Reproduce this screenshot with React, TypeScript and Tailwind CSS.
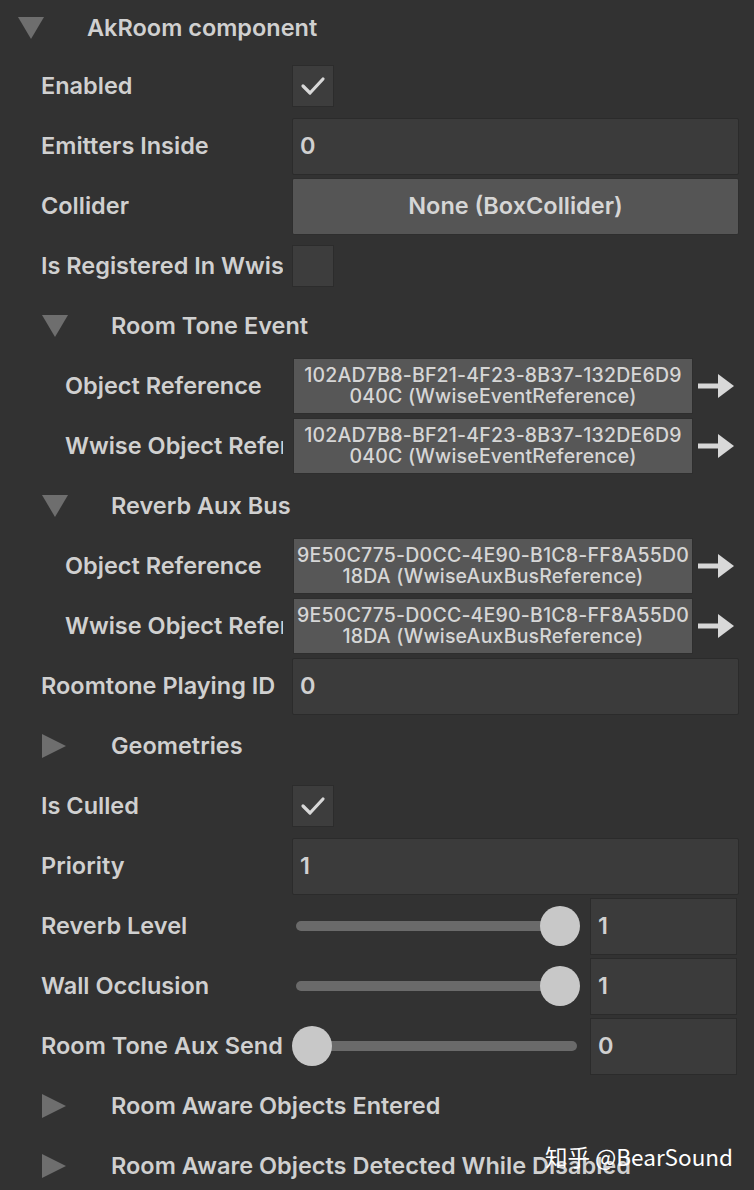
import React from "react";

const font = { fontFamily: "Inter, 'Noto Sans', sans-serif" };

function TriDown({ sub }: { sub?: boolean }) {
  return (
    <svg width="26" height="24" viewBox="0 0 26 24" className={sub ? "ml-[42px]" : "ml-[18px]"}>
      <polygon points="0,1 26,1 13,23" fill="#6e6e6e" />
    </svg>
  );
}

function TriRight() {
  return (
    <svg width="24" height="24" viewBox="0 0 24 24" className="ml-[42px]">
      <polygon points="0,0 24,12 0,24" fill="#6e6e6e" />
    </svg>
  );
}

function Label({ text, sub }: { text: string; sub?: boolean }) {
  return (
    <div
      className={`${sub ? "pl-[65px]" : "pl-[41px]"} w-[283px] shrink-0 overflow-hidden whitespace-nowrap text-[23.5px] text-[#d0d0d0] font-semibold`}
    >
      {text}
    </div>
  );
}

function Row({ children }: { children: React.ReactNode }) {
  return <div className="flex items-center h-[60px]">{children}</div>;
}

function Check({ checked }: { checked?: boolean }) {
  return (
    <div className="ml-[9px] w-[42px] h-[42px] bg-[#3d3d3d] border border-[#2c2c2c] flex items-center justify-center">
      {checked && (
        <svg width="26" height="22" viewBox="0 0 26 22">
          <polyline points="3,11 10,18 23,4" fill="none" stroke="#d8d8d8" strokeWidth="3.2" strokeLinecap="round" strokeLinejoin="round" />
        </svg>
      )}
    </div>
  );
}

function Field({ value }: { value: string }) {
  return (
    <div className="ml-[9px] w-[447px] h-[57px] bg-[#3b3b3b] border border-[#2b2b2b] rounded-[2px] flex items-center pl-[7px] text-[23.5px] font-semibold text-[#d0d0d0]">
      {value}
    </div>
  );
}

function RefBox({ l1, l2 }: { l1: string; l2: string }) {
  return (
    <div className="ml-[10px] flex items-center">
      <div className="w-[400px] h-[56px] bg-[#575757] border border-[#2e2e2e] flex flex-col items-center justify-center text-[19.5px] leading-[21px] tracking-[0.2px] font-medium text-[#d6d6d6] whitespace-nowrap overflow-hidden">
        <div>{l1}</div>
        <div>{l2}</div>
      </div>
      <svg width="40" height="28" viewBox="0 0 40 28" className="ml-[3px]">
        <line x1="2" y1="14" x2="26" y2="14" stroke="#d8d8d8" strokeWidth="5" />
        <polygon points="22,2 38,14 22,26" fill="#d8d8d8" />
      </svg>
    </div>
  );
}

function Slider({ value, pos }: { value: string; pos: number }) {
  return (
    <div className="ml-[9px] flex items-center">
      <div className="relative w-[290px] h-[44px] flex items-center">
        <div className="ml-[4px] w-[281px] h-[10px] rounded-full bg-[#6a6a6a]" />
        <div
          className="absolute top-[2px] w-[40px] h-[40px] rounded-full bg-[#c8c8c8]"
          style={{ left: pos === 1 ? 248 : 0 }}
        />
      </div>
      <div className="ml-[8px] w-[147px] h-[57px] bg-[#3b3b3b] border border-[#2b2b2b] flex items-center pl-[7px] text-[23.5px] font-semibold text-[#d0d0d0]">
        {value}
      </div>
    </div>
  );
}

function Section({ title, open, sub }: { title: string; open?: boolean; sub?: boolean }) {
  return (
    <Row>
      {open ? <TriDown sub={sub} /> : <TriRight />}
      <div className={`${open ? "ml-[43px]" : "ml-[45px]"} text-[23.5px] font-semibold text-[#d0d0d0] whitespace-nowrap`}>
        {title}
      </div>
    </Row>
  );
}

export default function App() {
  return (
    <div className="w-[754px] h-[1190px] bg-[#323232] overflow-hidden relative" style={font}>
      <div className="flex items-center h-[56px]">
        <TriDown />
        <div className="ml-[43px] text-[23.5px] font-semibold text-[#d0d0d0]">AkRoom component</div>
      </div>
      <Row>
        <Label text="Enabled" />
        <Check checked />
      </Row>
      <Row>
        <Label text="Emitters Inside" />
        <Field value="0" />
      </Row>
      <Row>
        <Label text="Collider" />
        <div className="ml-[9px] w-[447px] h-[57px] bg-[#555555] border border-[#2e2e2e] rounded-[2px] flex items-center justify-center text-[23.5px] font-semibold text-[#d6d6d6]">
          None (BoxCollider)
        </div>
      </Row>
      <Row>
        <Label text="Is Registered In Wwise" />
        <Check />
      </Row>
      <Section title="Room Tone Event" open sub />
      <Row>
        <Label text="Object Reference" sub />
        <RefBox l1="102AD7B8-BF21-4F23-8B37-132DE6D9" l2="040C (WwiseEventReference)" />
      </Row>
      <Row>
        <Label text="Wwise Object Reference" sub />
        <RefBox l1="102AD7B8-BF21-4F23-8B37-132DE6D9" l2="040C (WwiseEventReference)" />
      </Row>
      <Section title="Reverb Aux Bus" open sub />
      <Row>
        <Label text="Object Reference" sub />
        <RefBox l1="9E50C775-D0CC-4E90-B1C8-FF8A55D0" l2="18DA (WwiseAuxBusReference)" />
      </Row>
      <Row>
        <Label text="Wwise Object Reference" sub />
        <RefBox l1="9E50C775-D0CC-4E90-B1C8-FF8A55D0" l2="18DA (WwiseAuxBusReference)" />
      </Row>
      <Row>
        <Label text="Roomtone Playing ID" />
        <Field value="0" />
      </Row>
      <Section title="Geometries" />
      <Row>
        <Label text="Is Culled" />
        <Check checked />
      </Row>
      <Row>
        <Label text="Priority" />
        <Field value="1" />
      </Row>
      <Row>
        <Label text="Reverb Level" />
        <Slider value="1" pos={1} />
      </Row>
      <Row>
        <Label text="Wall Occlusion" />
        <Slider value="1" pos={1} />
      </Row>
      <Row>
        <Label text="Room Tone Aux Send" />
        <Slider value="0" pos={0} />
      </Row>
      <Section title="Room Aware Objects Entered" />
      <Section title="Room Aware Objects Detected While Disabled" />
      <div
        className="absolute left-[545px] top-[1141px] text-[22.5px] leading-[30px] text-white"
        style={{ fontFamily: "'Noto Sans CJK SC', 'Noto Sans', sans-serif" }}
      >
        知乎 @BearSound
      </div>
    </div>
  );
}
